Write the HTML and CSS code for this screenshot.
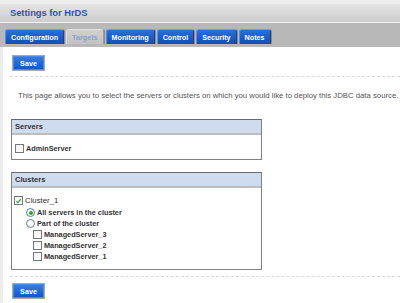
FILE: index.html
```html
<!DOCTYPE html>
<html>
<head>
<meta charset="utf-8">
<link rel="stylesheet" href="styles.css">
</head>
<body>
<div class="page">
  <div class="titlebar"><span class="title">Settings for HrDS</span></div>
  <div class="gap-line"></div>
  <div class="tabstrip">
    <div class="tab">Configuration</div>
    <div class="tab sel">Targets</div>
    <div class="tab">Monitoring</div>
    <div class="tab">Control</div>
    <div class="tab">Security</div>
    <div class="tab">Notes</div>
  </div>
  <div class="content">
    <div class="btnrow top"><div class="save">Save</div></div>
    <div class="sep"></div>
    <p class="desc">This page allows you to select the servers or clusters on which you would like to deploy this JDBC data source.</p>
    <div class="box servers">
      <div class="box-head">Servers</div>
      <div class="box-body">
        <div class="row"><span class="cb"></span><span class="lbl">AdminServer</span></div>
      </div>
    </div>
    <div class="box clusters">
      <div class="box-head">Clusters</div>
      <div class="box-body">
        <div class="row first"><span class="cb checked"><svg viewBox="0 0 8 8" width="8" height="8"><path d="M1.5 4.2 L3.2 5.8 L6.6 2" fill="none" stroke="#2fa82f" stroke-width="1.4"/></svg></span><span class="lbl norm">Cluster_1</span></div>
        <div class="row ind1"><span class="rb on"></span><span class="lbl">All servers in the cluster</span></div>
        <div class="row ind1"><span class="rb"></span><span class="lbl">Part of the cluster</span></div>
        <div class="row ind2"><span class="cb"></span><span class="lbl">ManagedServer_3</span></div>
        <div class="row ind2"><span class="cb"></span><span class="lbl">ManagedServer_2</span></div>
        <div class="row ind2"><span class="cb"></span><span class="lbl">ManagedServer_1</span></div>
      </div>
    </div>
    <div class="sep bottom"></div>
    <div class="btnrow"><div class="save">Save</div></div>
  </div>
</div>
</body>
</html>
```

FILE: styles.css
```css
* { box-sizing: border-box; }
html, body { margin: 0; padding: 0; background: #fff; }
body { font-family: "Liberation Sans", Arial, sans-serif; width: 400px; height: 303px; overflow: hidden; }
.page { width: 400px; }
.titlebar {
  height: 22px;
  border-top: 4px solid #efefef;
  background: linear-gradient(#e4e4e4, #cdcdcd);
  padding-left: 10px;
  display: flex;
  align-items: center;
}
.title { color: #1f56b8; font-weight: bold; font-size: 9.3px; }
.gap-line { height: 1px; background: #f2f2f2; }
.tabstrip {
  height: 24px;
  background: #b8b8b8;
  display: flex;
  align-items: flex-start;
  padding: 6px 0 0 5px;
  gap: 2px;
}
.tab {
  height: 15px;
  padding: 0 5px;
  background: linear-gradient(#2a70d8, #0d4fb8);
  color: #fff;
  font-weight: bold;
  font-size: 7.2px;
  display: flex;
  align-items: center;
  border-radius: 3px 3px 0 0;
  border-top: 1px solid #6c9be0;
  border-left: 1px solid #5a8bd6;
  border-right: 1px solid #1d3f7a;
  box-shadow: 1px 0 0 #8a8a8a;
}
.tab.sel {
  background: linear-gradient(#d0d0d0, #c2c2c2);
  color: #8aa3cc;
  border-top: 1px solid #e0e0e0;
  border-left: 1px solid #dcdcdc;
  border-right: 1px solid #9a9a9a;
}
.content {
  border-left: 3px solid #ececec;
  height: 256px;
  padding-left: 9px;
}
.btnrow { display: flex; }
.btnrow.top { padding-top: 8px; }
.save {
  width: 33px;
  height: 16px;
  border: 1px solid #a8a8a8;
  background: linear-gradient(#3c7fe0, #0d54c8);
  box-shadow: inset 0 0 0 1px #4d8be2;
  color: #fff;
  font-weight: bold;
  font-size: 7.2px;
  display: flex;
  align-items: center;
  justify-content: center;
}
.sep {
  margin-top: 5px;
  margin-left: -2px;
  height: 0;
  border-top: 1px dashed #dadada;
}
.sep.bottom { margin-top: 6px; margin-bottom: 6px; }
.desc {
  margin: 14px 0 0 6px;
  font-size: 7.75px;
  line-height: 10px;
  color: #555;
  white-space: nowrap;
}
.box {
  width: 251px;
  margin-left: -1px;
  border: 1px solid #808080;
  border-top-color: #6a6a6a;
}
.servers { margin-top: 18px; height: 41px; }
.clusters { margin-top: 12px; height: 98px; }
.box-head {
  height: 15px;
  background: #cfdcef;
  border-bottom: 2px solid #bdbdbd;
  font-size: 7.6px;
  font-weight: bold;
  color: #333;
  padding-left: 3px;
  display: flex;
  align-items: center;
}
.servers .box-body { padding: 7px 0 0 3px; }
.clusters .box-body { padding: 6px 0 0 2px; }
.row { display: flex; align-items: center; height: 11px; }
.row.first { height: 13px; }
.servers .row { height: 12px; }
.ind1 { padding-left: 12px; }
.ind2 { padding-left: 19px; }
.cb {
  width: 9px; height: 9px;
  border: 1px solid #777;
  background: linear-gradient(#f4f4f4, #fff);
  margin-right: 2px;
  display: flex; align-items: center; justify-content: center;
  flex: none;
}
.cb svg { display: block; }
.rb {
  width: 9px; height: 9px;
  border: 1px solid #5a7ba8;
  border-radius: 50%;
  background: #fff;
  margin-right: 2px;
  flex: none;
  position: relative;
}
.rb.on::after {
  content: "";
  position: absolute;
  left: 1.5px; top: 1.5px;
  width: 4px; height: 4px;
  border-radius: 50%;
  background: #2ea12e;
}
.lbl { font-size: 7.3px; font-weight: bold; color: #333; white-space: nowrap; }
.lbl.norm { font-weight: normal; font-size: 7.8px; }
```
